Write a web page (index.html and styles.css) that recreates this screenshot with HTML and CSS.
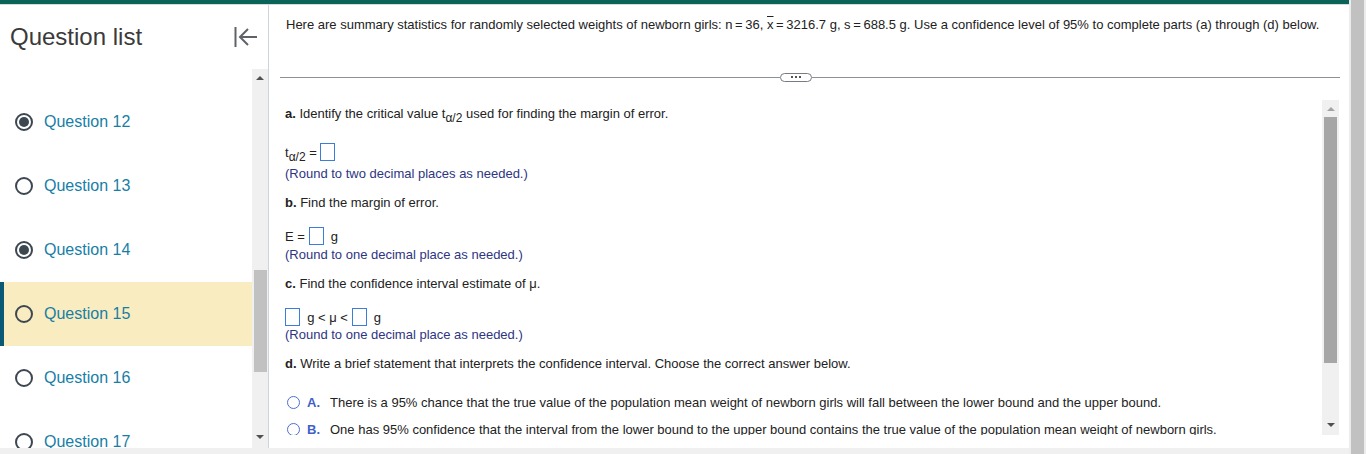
FILE: index.html
```html
<!DOCTYPE html>
<html lang="en">
<head>
    <meta charset="UTF-8">
    <meta name="viewport" content="width=device-width, initial-scale=1.0">
    <title>Question 15</title>
    <link rel="stylesheet" href="styles.css">
</head>
<body>
    <div class="window">
        <div class="viewport">
            <div class="topbar"></div>
            <div class="app">
                <aside class="sidebar">
                    <div class="sidebar-head">
                        <h2 class="sidebar-title">Question list</h2>
                        <button class="collapse" aria-label="Collapse question list">
                            <svg width="24" height="22" viewBox="0 0 24 22">
                                <path d="M1.5 1 V21" stroke="#5f6368" stroke-width="2" fill="none"/>
                                <path d="M6 11 H23 M14 3 L6 11 L14 19" stroke="#5f6368" stroke-width="2" fill="none"/>
                            </svg>
                        </button>
                    </div>
                    <div class="list-wrap">
                        <ul class="qlist">
                            <li class="qitem done"><span class="radio"></span>Question 12</li>
                            <li class="qitem"><span class="radio"></span>Question 13</li>
                            <li class="qitem done"><span class="radio"></span>Question 14</li>
                            <li class="qitem current"><span class="radio"></span>Question 15</li>
                            <li class="qitem"><span class="radio"></span>Question 16</li>
                            <li class="qitem"><span class="radio"></span>Question 17</li>
                        </ul>
                        <div class="vscroll side-scroll">
                            <span class="arrow up"></span>
                            <span class="thumb"></span>
                            <span class="arrow down"></span>
                        </div>
                    </div>
                </aside>
                <main class="question">
                    <div class="stem">
                        Here are summary statistics for randomly selected weights of newborn girls: n&thinsp;=&thinsp;36, <span class="xbar">x</span>&thinsp;=&thinsp;3216.7 g, s&thinsp;=&thinsp;688.5 g. Use a confidence level of 95% to complete parts (a) through (d) below.
                    </div>
                    <div class="divider">
                        <span class="rule short"></span>
                        <span class="pill"><i></i><i></i><i></i></span>
                        <span class="rule"></span>
                    </div>
                    <div class="work">
                        <div class="work-body">
                            <p class="part"><b>a.</b> Identify the critical value t<sub>α/2</sub> used for finding the margin of error.</p>
                            <div class="answer first"><span class="math">t<sub>α/2</sub> =&nbsp;</span><span class="box"></span></div>
                            <p class="hint tight">(Round to two decimal places as needed.)</p>

                            <p class="part"><b>b.</b> Find the margin of error.</p>
                            <div class="answer"><span class="math">E =&nbsp;</span><span class="box"></span><span class="math">&nbsp;&nbsp;g</span></div>
                            <p class="hint">(Round to one decimal place as needed.)</p>

                            <p class="part"><b>c.</b> Find the confidence interval estimate of μ.</p>
                            <div class="answer"><span class="box"></span><span class="math">&nbsp;&nbsp;g &lt; μ &lt;&nbsp;</span><span class="box"></span><span class="math">&nbsp;&nbsp;g</span></div>
                            <p class="hint flush">(Round to one decimal place as needed.)</p>

                            <p class="part"><b>d.</b> Write a brief statement that interprets the confidence interval. Choose the correct answer below.</p>
                            <div class="choices">
                                <div class="choice"><span class="opt"></span><b class="letter">A.</b>There is a 95% chance that the true value of the population mean weight of newborn girls will fall between the lower bound and the upper bound.</div>
                                <div class="choice"><span class="opt"></span><b class="letter">B.</b>One has 95% confidence that the interval from the lower bound to the upper bound contains the true value of the population mean weight of newborn girls.</div>
                            </div>
                        </div>
                        <div class="vscroll work-scroll">
                            <span class="arrow up light"></span>
                            <span class="thumb"></span>
                            <span class="arrow down"></span>
                        </div>
                    </div>
                </main>
            </div>
            <div class="hscroll"></div>
        </div>
        <div class="page-scroll"><div class="page-thumb"></div></div>
    </div>
</body>
</html>
```

FILE: styles.css
```css
html, body {
    margin: 0;
    height: 100%;
    overflow: hidden;
}
body {
    font-family: "Liberation Sans", Arial, sans-serif;
    background: #fff;
    color: #222;
}
.window {
    display: flex;
    height: 454px;
}
.viewport {
    flex: 1;
    display: flex;
    flex-direction: column;
    min-width: 0;
}
.topbar {
    height: 4px;
    background: #0b6259;
    border-bottom: 1px solid #d5dbe0;
}
.app {
    flex: 1;
    display: flex;
    min-height: 0;
}
.hscroll {
    height: 6px;
    background: #f0f0f0;
}
.page-scroll {
    width: 17px;
    background: #ececec;
    display: flex;
    padding: 0 2px;
    box-sizing: border-box;
}
.page-thumb {
    flex: 1;
    background: #c1c1c1;
}

/* sidebar */
.sidebar {
    width: 268px;
    border-right: 1px solid #cfd3da;
    display: flex;
    flex-direction: column;
}
.sidebar-head {
    height: 64px;
    display: flex;
    align-items: center;
    justify-content: space-between;
    padding: 0 10px;
}
.sidebar-title {
    margin: 0;
    font-size: 24px;
    font-weight: normal;
    color: #3a3a3a;
}
.collapse {
    border: 0;
    background: none;
    padding: 0;
    width: 24px;
    height: 22px;
    display: flex;
}
.list-wrap {
    flex: 1;
    display: flex;
    min-height: 0;
    overflow: hidden;
}
.qlist {
    flex: 1;
    list-style: none;
    margin: 0;
    padding: 21px 0 0;
}
.qitem {
    height: 64px;
    display: flex;
    align-items: center;
    gap: 11px;
    padding-left: 15px;
    font-size: 16px;
    color: #177ea6;
}
.qitem.current {
    background: #f9ecc0;
    box-shadow: inset 4px 0 0 #0a5a75;
}
.radio {
    width: 18px;
    height: 18px;
    box-sizing: border-box;
    border: 2px solid #3d4752;
    border-radius: 50%;
    display: flex;
    align-items: center;
    justify-content: center;
}
.qitem.done .radio::after {
    content: "";
    width: 10px;
    height: 10px;
    border-radius: 50%;
    background: #3d4752;
}

/* scrollbars */
.vscroll {
    width: 16px;
    background: #f0f0f0;
    display: flex;
    flex-direction: column;
    align-items: center;
}
.arrow {
    width: 0;
    height: 0;
    border-left: 4px solid transparent;
    border-right: 4px solid transparent;
}
.arrow.up {
    border-bottom: 4px solid #505050;
    margin-top: 7px;
}
.arrow.up.light {
    border-bottom-color: #a3a3a3;
}
.arrow.down {
    border-top: 4px solid #505050;
    margin-top: auto;
    margin-bottom: 8px;
}
.side-scroll .thumb {
    width: 13px;
    height: 102px;
    margin-top: 190px;
    background: #c1c1c1;
}
.side-scroll .arrow.down {
    margin-bottom: 9px;
}

/* question pane */
.question {
    flex: 1;
    display: flex;
    flex-direction: column;
    min-width: 0;
}
.stem {
    height: 54px;
    padding: 12px 0 0 17px;
    font-size: 13px;
    line-height: 15px;
}
.xbar {
    text-decoration: overline;
}
.divider {
    height: 12px;
    display: flex;
    align-items: center;
    margin: 0 9px 0 11px;
}
.rule {
    flex: 1;
    height: 1px;
    background: #8d9196;
}
.rule.short {
    flex: 0 0 500px;
}
.pill {
    width: 30px;
    height: 7px;
    border: 1px solid #777c82;
    border-radius: 5px;
    display: flex;
    align-items: center;
    justify-content: center;
    gap: 2px;
}
.pill i {
    width: 2px;
    height: 2px;
    background: #555;
}
.work {
    margin-top: 17px;
    height: 335px;
    display: flex;
    margin-right: 10px;
}
.work-body {
    flex: 1;
    overflow: hidden;
    padding: 6px 0 0 16px;
    font-size: 13px;
    line-height: 15px;
}
.work-scroll {
    width: 17px;
}
.work-scroll .thumb {
    width: 13px;
    height: 246px;
    margin-top: 6px;
    background: #a6a6a6;
}
.part {
    margin: 14px 0 0;
}
.part:first-child {
    margin-top: 0;
}
sub {
    font-size: 12px;
    line-height: 0;
    vertical-align: -4px;
}
.answer {
    height: 20px;
    display: flex;
    align-items: center;
    margin-top: 16px;
}
.answer.first {
    margin-top: 21px;
}
.math {
    white-space: pre;
}
.box {
    width: 15px;
    height: 18px;
    box-sizing: border-box;
    border: 1px solid #3b7dd8;
    display: inline-block;
}
.hint {
    margin: 1px 0 0;
    color: #2e3582;
}
.hint.tight {
    margin-top: 4px;
}
.hint.flush {
    margin-top: 0;
}
.choices {
    margin-top: 24px;
    display: flex;
    flex-direction: column;
    gap: 12px;
}
.choice {
    display: flex;
    align-items: center;
    padding-left: 2px;
    white-space: nowrap;
}
.opt {
    width: 13px;
    height: 13px;
    box-sizing: border-box;
    border: 1.5px solid #4b6fd0;
    border-radius: 50%;
    margin-right: 7px;
}
.letter {
    width: 23px;
    color: #3f5fc9;
}
```
